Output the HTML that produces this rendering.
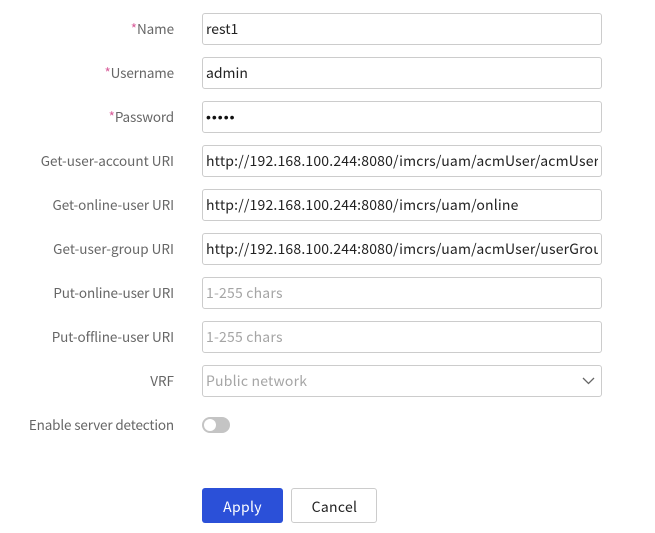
<!DOCTYPE html>
<html><head><meta charset="utf-8"><style>
html,body{margin:0;padding:0;background:#fff;width:655px;height:533px;overflow:hidden}
body{position:relative;font-family:"Noto Sans CJK SC","Liberation Sans",sans-serif;font-size:14px}
.l{position:absolute;right:481px;height:32px;line-height:30px;color:#666;white-space:nowrap;font-size:13.5px}
.l b{font-weight:400;color:#d9609c}
.i{position:absolute;left:202px;width:400px;height:32px;box-sizing:border-box;border:1px solid #ccc;border-radius:3px;line-height:30px;padding:0 3px;color:#222;white-space:nowrap;overflow:hidden}
.i span{display:block;overflow:hidden}
.u{letter-spacing:.18px}
.p{color:#a5a5a5;letter-spacing:.2px}
.t{position:absolute;left:202px;top:417px;width:28px;height:16px;border-radius:8px;background:#c4c4c4}
.t:after{content:"";position:absolute;left:2px;top:2px;width:12px;height:12px;border-radius:50%;background:#fff}
.b{position:absolute;top:488px;height:35px;box-sizing:border-box;border-radius:3px;text-align:center;letter-spacing:.3px}
</style></head><body>
<div class="l" style="top:13px;letter-spacing:-.08px"><b>*</b>Name</div><div class="i" style="top:13px"><span>rest1</span></div>
<div class="l" style="top:57px;letter-spacing:-.15px"><b>*</b>Username</div><div class="i" style="top:57px"><span>admin</span></div>
<div class="l" style="top:101px;letter-spacing:-.17px"><b>*</b>Password</div><div class="i" style="top:101px;letter-spacing:1px;color:#111;font-family:'Liberation Sans',sans-serif"><span>•••••</span></div>
<div class="l" style="top:145px">Get-user-account URI</div><div class="i u" style="top:145px"><span>http://192.168.100.244:8080/imcrs/uam/acmUser/acmUserList</span></div>
<div class="l" style="top:189px;letter-spacing:-.08px">Get-online-user URI</div><div class="i u" style="top:189px"><span>http://192.168.100.244:8080/imcrs/uam/online</span></div>
<div class="l" style="top:233px;letter-spacing:.03px">Get-user-group URI</div><div class="i u" style="top:233px"><span>http://192.168.100.244:8080/imcrs/uam/acmUser/userGroup</span></div>
<div class="l" style="top:277px;letter-spacing:-.13px">Put-online-user URI</div><div class="i p" style="top:277px"><span>1-255 chars</span></div>
<div class="l" style="top:321px;letter-spacing:-.07px">Put-offline-user URI</div><div class="i p" style="top:321px"><span>1-255 chars</span></div>
<div class="l" style="top:365px">VRF</div><div class="i p" style="top:365px"><span>Public network</span></div>
<svg style="position:absolute;left:581px;top:376px" width="15" height="10" viewBox="0 0 15 10"><path d="M2 2L7.500 7.500L13 2" fill="none" stroke="#666" stroke-width="1.300"/></svg>
<div class="l" style="top:409px;letter-spacing:-.15px">Enable server detection</div><div class="t"></div>
<div class="b" style="left:202px;width:81px;background:#2b50d8;color:#fff;line-height:38px">Apply</div>
<div class="b" style="left:291px;width:86px;border:1px solid #ccc;color:#222;line-height:36px;padding-left:1px">Cancel</div>
</body></html>
